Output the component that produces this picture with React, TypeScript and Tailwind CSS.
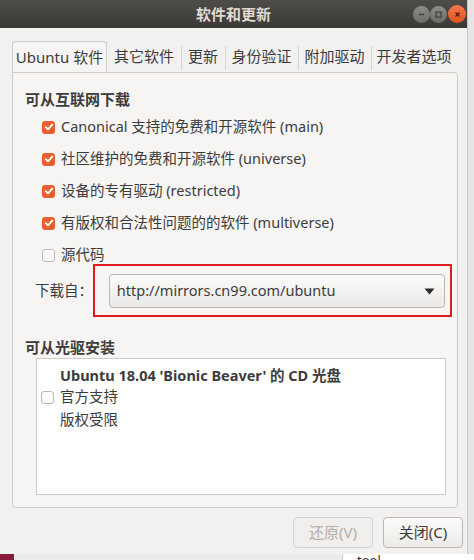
import React from "react";

const font = { fontFamily: '"Noto Sans", "Noto Sans CJK SC", sans-serif' };

const tabs = [
    { label: "Ubuntu 软件", w: "w-[95px]" },
    { label: "其它软件", w: "w-[74px]" },
    { label: "更新", w: "w-[44px]" },
    { label: "身份验证", w: "w-[73px]" },
    { label: "附加驱动", w: "w-[73px]" },
    { label: "开发者选项", w: "w-[86px]" },
];

const sources = [
    { text: "Canonical 支持的免费和开源软件 (main)", on: true },
    { text: "社区维护的免费和开源软件 (universe)", on: true },
    { text: "设备的专有驱动 (restricted)", on: true },
    { text: "有版权和合法性问题的的软件 (multiverse)", on: true },
    { text: "源代码", on: false },
];

const Check = ({ on }: { on: boolean }) =>
    on ? (
        <span className="w-[13px] h-[13px] rounded-[3px] bg-[#e4602e] flex items-center justify-center shrink-0">
            <svg width="10" height="10" viewBox="0 0 10 10">
                <path d="M1.8 5.2 L4 7.4 L8.3 2.6" stroke="#fff" strokeWidth="1.9" fill="none" strokeLinecap="round" strokeLinejoin="round" />
            </svg>
        </span>
    ) : (
        <span className="w-[13px] h-[13px] rounded-[3px] border border-[#bdb8b2] bg-[#fbfbfa] shrink-0" />
    );

const WinButton = ({ kind }: { kind: "min" | "max" | "close" }) => (
    <span
        className={
            kind === "close"
                ? "w-[18px] h-[18px] rounded-full bg-gradient-to-b from-[#f47a4b] to-[#e1501f] flex items-center justify-center"
                : "w-[17px] h-[17px] rounded-full bg-gradient-to-b from-[#8f8d88] to-[#6b6a66] flex items-center justify-center"
        }
    >
        <svg width="9" height="9" viewBox="0 0 9 9">
            {kind === "min" && <path d="M2 4.5 H7" stroke="#3e3d3a" strokeWidth="1.4" />}
            {kind === "max" && <rect x="2" y="2" width="5" height="5" stroke="#3e3d3a" strokeWidth="1.2" fill="none" />}
            {kind === "close" && <path d="M2.5 2.5 L6.5 6.5 M6.5 2.5 L2.5 6.5" stroke="#5a1a08" strokeWidth="1.4" />}
        </svg>
    </span>
);

const App = () => {
    return (
        <div className="w-[474px] h-[560px] overflow-hidden flex flex-col bg-[#e9e8e6] text-[#3c3c3c]" style={font}>
            <div className="flex h-[554px]">
                {/* window */}
                <div className="w-[467px] h-full flex flex-col bg-[#f2f1f0]">
                    <div className="h-[28px] shrink-0 relative flex items-center justify-center bg-gradient-to-b from-[#4d4c47] to-[#3b3a36]">
                        <span className="text-[15px] font-bold text-[#dfdbd2]">软件和更新</span>
                        <div className="absolute left-[413px] top-[5px] flex items-center gap-[-1px]">
                            <WinButton kind="min" />
                            <WinButton kind="max" />
                            <span className="w-[1px]" />
                            <WinButton kind="close" />
                        </div>
                    </div>

                    {/* tabs */}
                    <div className="flex items-end h-[44px] pl-[12px] pt-[13px]">
                        {tabs.map((t, i) =>
                            i === 0 ? (
                                <div key={i} className={`${t.w} h-[32px] flex items-center justify-center text-[15px] border border-b-0 border-[#cfcac5] rounded-t-[4px] bg-[#f6f5f4] relative top-[1px]`}>
                                    {t.label}
                                </div>
                            ) : (
                                <div key={i} className={`${t.w} h-[31px] flex items-center justify-center text-[15px] relative`}>
                                    {i > 1 && <span className="absolute left-0 top-[5px] h-[24px] w-px bg-[#d8d4cf]" />}
                                    {t.label}
                                </div>
                            )
                        )}
                    </div>

                    {/* panel */}
                    <div className="relative ml-[12px] w-[446px] h-[436px] border border-[#cfcac5] rounded-b-[4px] rounded-tr-[4px] bg-[#f6f5f4] pt-[15px] px-[12px]">
                        <div className="h-[22px] flex items-center text-[15px] font-bold">可从互联网下载</div>
                        <div className="mt-[1px] flex flex-col pl-[17px]">
                            {sources.map((s, i) => (
                                <div key={i} className="h-[32px] flex items-center gap-[6px] text-[14.5px]">
                                    <Check on={s.on} />
                                    <span>{s.text}</span>
                                </div>
                            ))}
                        </div>
                        <div className="mt-[3px] h-[34px] flex items-center">
                            <span className="w-[84px] pl-[10px] text-[14.5px]">下载自：</span>
                            <div className="w-[337px] h-[34px] rounded-[4px] border border-[#bdb6b0] bg-gradient-to-b from-[#fbfbfa] to-[#ebe9e7] flex items-center justify-between pl-[7px] pr-[9px] text-[14.5px]">
                                <span>http://mirrors.cn99.com/ubuntu</span>
                                <svg width="11" height="7" viewBox="0 0 11 7">
                                    <path d="M0.5 0.5 H10.5 L5.5 6.5 Z" fill="#2c2c2c" />
                                </svg>
                            </div>
                        </div>
                        {/* red annotation box */}
                        <div className="absolute left-[80px] top-[191px] w-[359px] h-[53px] border-2 border-[#dc1b22]" />

                        <div className="mt-[28px] h-[22px] flex items-center text-[15px] font-bold">可从光驱安装</div>
                        <div className="ml-[11px] w-[410px] h-[137px] bg-white border border-[#cfcac5] relative">
                            <div className="pl-[23px] pt-[5px] text-[14.5px] font-bold leading-[22px]">Ubuntu 18.04 'Bionic Beaver' 的 CD 光盘</div>
                            <div className="flex items-center gap-[6px] pl-[4px] h-[22px] text-[14.5px]">
                                <Check on={false} />
                                <span>官方支持</span>
                            </div>
                            <div className="pl-[23px] h-[22px] leading-[22px] text-[14.5px]">版权受限</div>
                        </div>
                    </div>

                    {/* buttons */}
                    <div className="flex justify-end gap-[10px] pr-[4px] pt-[9px]">
                        <div className="w-[80px] h-[31px] rounded-[4px] border border-[#d6d2cd] bg-[#f0efee] flex items-center justify-center text-[15px] text-[#b3aea8]">还原(V)</div>
                        <div className="w-[80px] h-[31px] rounded-[4px] border border-[#bdb6b0] bg-gradient-to-b from-[#fbfbfa] to-[#ecebe9] flex items-center justify-center text-[15px] text-[#3c3c3c]">关闭(C)</div>
                    </div>
                </div>
                {/* desktop behind */}
                <div className="flex-1 bg-[#e6e5e3] border-l border-[#c9c7c4]" />
            </div>
            <div className="h-[6px] flex overflow-hidden">
                <div className="w-[14px] bg-[#8a1a3a]" />
                <div className="w-[328px] bg-[#ebebeb]" />
                <div className="flex-1 bg-white border-l border-[#cccccc] pl-[14px] text-[13px] leading-[13px] text-[#333]">tool</div>
            </div>
        </div>
    );
};

export default App;
